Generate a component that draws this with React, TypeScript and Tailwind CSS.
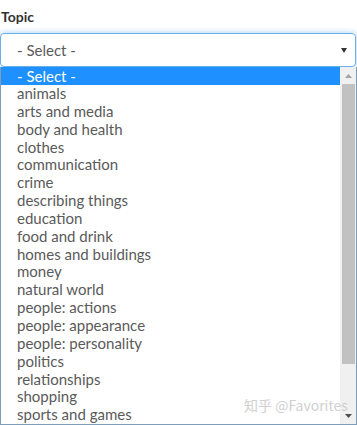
import React from "react";

const items = [
  "animals",
  "arts and media",
  "body and health",
  "clothes",
  "communication",
  "crime",
  "describing things",
  "education",
  "food and drink",
  "homes and buildings",
  "money",
  "natural world",
  "people: actions",
  "people: appearance",
  "people: personality",
  "politics",
  "relationships",
  "shopping",
  "sports and games",
];

export default function App() {
  return (
    <div
      className="w-[357px] h-[425px] overflow-hidden bg-white relative"
      style={{ fontFamily: "Lato, 'Noto Sans', sans-serif" }}
    >
      <div className="h-[33px] pt-[6px] pl-px text-[14px] font-bold text-[#333]">Topic</div>
      <div className="h-[34px] w-[356px] border border-[#66afe9] rounded-[4px] shadow-[0_0_6px_rgba(102,175,233,0.6)] flex items-center pl-[16px] pr-[6px] text-[15px] text-[#5a5a5a]">
        <span className="flex-1">- Select -</span>
        <svg width="6" height="5" viewBox="0 0 6 5" className="mr-[2px]">
          <path d="M0 0 L6 0 L3 5 Z" fill="#333" />
        </svg>
      </div>
      <div className="w-[357px] h-[358px] border border-[#7f9db9] border-t-0 flex">
        <div className="flex-1 flex flex-col text-[15px] text-[#5a5a5a] leading-[17.85px]">
          <div className="h-[18px] bg-[#1e90ff] text-white pl-[16px] leading-[18px]">- Select -</div>
          {items.map((t) => (
            <div key={t} className="h-[17.85px] pl-[16px] shrink-0 whitespace-nowrap">
              {t}
            </div>
          ))}
        </div>
        <div className="w-[16px] bg-[#f0f0f0] flex flex-col items-center">
          <div className="h-[17px] w-full flex items-center justify-center">
            <svg width="7" height="4" viewBox="0 0 7 4">
              <path d="M0 4 L7 4 L3.5 0 Z" fill="#a3a3a3" />
            </svg>
          </div>
          <div className="w-[13px] h-[280px] bg-[#c1c1c1]" />
          <div className="flex-1" />
          <div className="h-[17px] w-full flex items-center justify-center">
            <svg width="7" height="4" viewBox="0 0 7 4">
              <path d="M0 0 L7 0 L3.5 4 Z" fill="#505050" />
            </svg>
          </div>
        </div>
      </div>
      <div
        className="absolute left-[244px] top-[395px] text-[14px] text-[#d0d0d0]"
        style={{ fontFamily: "'Noto Sans CJK SC', sans-serif" }}
      >
        知乎 @Favorites
      </div>
    </div>
  );
}
